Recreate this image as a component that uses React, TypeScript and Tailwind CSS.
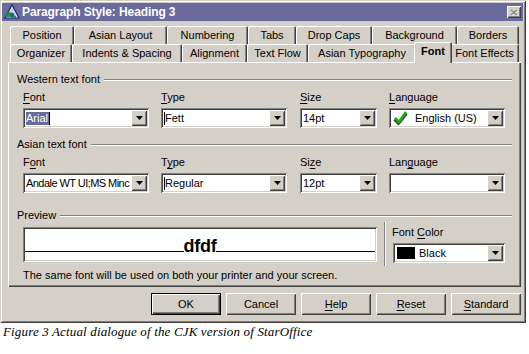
import type { ReactNode } from 'react'

const raised =
  'shadow-[inset_1px_1px_0_#ffffff,inset_-1px_-1px_0_#404040,inset_2px_2px_0_#d4d0c8,inset_-2px_-2px_0_#808080]'
const sunken =
  'shadow-[inset_1px_1px_0_#808080,inset_-1px_-1px_0_#ffffff,inset_2px_2px_0_#404040,inset_-2px_-2px_0_#d4d0c8]'

const backTabs = [
  { label: 'Position', w: 'w-[64px]' },
  { label: 'Asian Layout', w: 'w-[93px]' },
  { label: 'Numbering', w: 'w-[81px]' },
  { label: 'Tabs', w: 'w-[48px]' },
  { label: 'Drop Caps', w: 'w-[76px]' },
  { label: 'Background', w: 'w-[85px]' },
  { label: 'Borders', w: 'w-[62px]' },
]

const frontTabs = [
  { label: 'Organizer', w: 'w-[62px]' },
  { label: 'Indents & Spacing', w: 'w-[110px]' },
  { label: 'Alignment', w: 'w-[65px]' },
  { label: 'Text Flow', w: 'w-[61px]' },
  { label: 'Asian Typography', w: 'w-[108px]' },
  { label: 'Font', w: 'w-[34px]', active: true },
  { label: 'Font Effects', w: 'w-[69px]' },
]

function U({ children }: { children: ReactNode }) {
  return <span className="underline underline-offset-[2px] decoration-1">{children}</span>
}

function Arrow() {
  return (
    <svg width="7" height="4" viewBox="0 0 7 4">
      <path d="M0 0H7L3.5 4Z" fill="#000" />
    </svg>
  )
}

function Combo({ w, children }: { w: string; children?: ReactNode }) {
  return (
    <div className={`${w} h-[20px] bg-white ${sunken} p-[2px] flex`}>
      <div className="flex-1 min-w-0 overflow-hidden whitespace-nowrap flex items-center pl-[1px]">
        {children}
      </div>
      <div className={`w-[16px] h-[16px] bg-[#d4d0c8] ${raised} flex items-center justify-center`}>
        <Arrow />
      </div>
    </div>
  )
}

function GroupTitle({ label, className = '' }: { label: string; className?: string }) {
  return (
    <div className={`flex items-center pl-[9px] pr-[9px] h-[13px] ${className}`}>
      <span className="whitespace-nowrap">{label}</span>
      <div className="flex-1 ml-[4px] border-t border-[#808080] border-b border-b-white" />
    </div>
  )
}

function Check() {
  return (
    <svg width="15" height="14" viewBox="0 0 15 14" className="mr-[7px] ml-[1px]">
      <path d="M2 8 L6 12 L14 2" fill="none" stroke="#404040" strokeWidth="3" transform="translate(-0.5 0.5)" />
      <path d="M2 7 L6 11 L13 1" fill="none" stroke="#16b016" strokeWidth="2.6" />
    </svg>
  )
}

function AppIcon() {
  return (
    <svg width="16" height="16" viewBox="0 0 16 16">
      <path d="M8 1 L15 14 L1 14 Z" fill="#e8e8f0" stroke="#1c2c70" strokeWidth="1.2" />
      <path d="M8 3 L13 13 L3 13 Z" fill="#c8d0e0" />
      <path d="M3 9 C5 7 8 8 7 11 C6 14 3 14 2 12 Z" fill="#1a9a2a" />
      <path d="M7 9 C9 8 11 10 10 12 C9 14 7 14 6 12 Z" fill="#2050c0" />
      <path d="M9 12 C11 11 13 12 12 14 L8 14 Z" fill="#1a9a2a" />
    </svg>
  )
}

function Button({ children, isDefault }: { children: ReactNode; isDefault?: boolean }) {
  return (
    <div
      className={`w-[70px] h-[22px] bg-[#d4d0c8] flex items-center justify-center ${
        isDefault
          ? 'shadow-[inset_0_0_0_1px_#000000,inset_2px_2px_0_#ffffff,inset_-2px_-2px_0_#404040,inset_-3px_-3px_0_#808080]'
          : raised
      }`}
    >
      {children}
    </div>
  )
}

export default function App() {
  return (
    <div className="w-[529px] h-[354px] bg-white font-['Liberation_Sans',Arial,sans-serif] text-[11px] leading-[13px] text-black">
      <div className="w-[526px] h-[323px] bg-[#d4d0c8] shadow-[inset_1px_1px_0_#d4d0c8,inset_-1px_-1px_0_#404040,inset_2px_2px_0_#ffffff,inset_-2px_-2px_0_#808080] pl-[2px] pr-[3px] pt-[3px] flex flex-col">
        {/* title bar */}
        <div className="h-[18px] bg-[#6a6a9c] flex items-center pl-[2px] pr-[2px]">
          <AppIcon />
          <span className="ml-[2px] text-white font-bold text-[12px] tracking-[-0.1px]">
            Paragraph Style: Heading 3
          </span>
          <div className={`ml-auto w-[14px] h-[12px] bg-[#d4d0c8] ${raised} flex items-center justify-center`}>
            <svg width="8" height="7" viewBox="0 0 8 7">
              <path d="M1.5 1.5 L7.5 6.5 M7.5 1.5 L1.5 6.5" stroke="#ffffff" strokeWidth="1.4" />
              <path d="M1 1 L7 6 M7 1 L1 6" stroke="#808080" strokeWidth="1.4" />
            </svg>
          </div>
        </div>

        {/* tabs */}
        <div className="mt-[5px] ml-[8px] flex flex-col">
          <div className="flex h-[18px]">
            {backTabs.map((t) => (
              <div
                key={t.label}
                className={`${t.w} h-[18px] rounded-t-[2px] bg-[#d4d0c8] shadow-[inset_1px_1px_0_#ffffff,inset_-1px_0_0_#404040,inset_-2px_0_0_#808080] flex justify-center pt-[3px] whitespace-nowrap`}
              >
                {t.label}
              </div>
            ))}
          </div>
          <div className="flex h-[18px] items-end">
            {frontTabs.map((t) =>
              t.active ? (
                <div
                  key={t.label}
                  className="relative z-10 w-[38px] -mx-[2px] h-[21px] -mb-[1px] rounded-t-[2px] bg-[#d4d0c8] shadow-[inset_1px_1px_0_#ffffff,inset_-1px_0_0_#404040,inset_-2px_0_0_#808080] flex justify-center pt-[3px] font-bold whitespace-nowrap"
                >
                  {t.label}
                </div>
              ) : (
                <div
                  key={t.label}
                  className={`${t.w} h-[18px] rounded-t-[2px] bg-[#d4d0c8] shadow-[inset_1px_1px_0_#ffffff,inset_-1px_0_0_#404040,inset_-2px_0_0_#808080] flex justify-center pt-[3px] whitespace-nowrap`}
                >
                  {t.label}
                </div>
              ),
            )}
          </div>
        </div>

        {/* panel */}
        <div className="ml-[6px] w-[513px] h-[225px] shadow-[inset_1px_1px_0_#ffffff,inset_-1px_-1px_0_#404040,inset_-2px_-2px_0_#808080] pt-[11px] flex flex-col">
          <GroupTitle label="Western text font" />
          <div className="mt-[5px] pl-[15px] flex">
            <div className="w-[138px]"><U>F</U>ont</div>
            <div className="w-[139px]"><U>T</U>ype</div>
            <div className="w-[89px]"><U>S</U>ize</div>
            <div><U>L</U>anguage</div>
          </div>
          <div className="mt-[4px] pl-[15px] flex">
            <div className="w-[138px]">
              <Combo w="w-[126px]">
                <span className="bg-[#6a6a9c] text-white pr-[1px]">Arial</span>
                <span className="w-px h-[13px] bg-black" />
              </Combo>
            </div>
            <div className="w-[139px]">
              <Combo w="w-[126px]">
                <span className="w-px h-[13px] bg-black" />
                <span>Fett</span>
              </Combo>
            </div>
            <div className="w-[89px]">
              <Combo w="w-[77px]">14pt</Combo>
            </div>
            <Combo w="w-[116px]">
              <Check />
              English (US)
            </Combo>
          </div>

          <GroupTitle label="Asian text font" className="mt-[10px]" />
          <div className="mt-[5px] pl-[15px] flex">
            <div className="w-[138px]">F<U>o</U>nt</div>
            <div className="w-[139px]">T<U>y</U>pe</div>
            <div className="w-[89px]">Si<U>z</U>e</div>
            <div>Lan<U>g</U>uage</div>
          </div>
          <div className="mt-[4px] pl-[15px] flex">
            <div className="w-[138px]">
              <Combo w="w-[126px]">
                <span className="tracking-[-0.55px]">Andale WT UI;MS Minc</span>
              </Combo>
            </div>
            <div className="w-[139px]">
              <Combo w="w-[126px]">
                <span className="w-px h-[13px] bg-black" />
                <span>Regular</span>
              </Combo>
            </div>
            <div className="w-[89px]">
              <Combo w="w-[77px]">12pt</Combo>
            </div>
            <Combo w="w-[116px]" />
          </div>

          <GroupTitle label="Preview" className="mt-[16px]" />
          <div className="flex">
            <div className="pl-[15px] pt-[5px]">
              <div className={`w-[354px] h-[35px] bg-white ${sunken} p-[2px] flex flex-col`}>
                <div className="h-[26px] flex items-end">
                  <div className="flex-1 h-px bg-black mb-[3px]" />
                  <span className="font-bold text-[18px] leading-[18px] tracking-[-0.3px]">dfdf</span>
                  <div className="flex-1 h-px bg-black mb-[3px]" />
                </div>
              </div>
            </div>
            <div className="ml-[7px] w-[2px] h-[44px] border-l border-[#808080] border-r border-r-white" />
            <div className="ml-[6px] pt-[4px] flex flex-col">
              <div>
                Font <U>C</U>olor
              </div>
              <div className="mt-[4px] ml-[1px]">
                <Combo w="w-[112px]">
                  <span className="w-[18px] h-[12px] bg-black mx-[1px] mr-[4px]" />
                  Black
                </Combo>
              </div>
            </div>
          </div>
          <div className="mt-[3px] pl-[15px] whitespace-nowrap">
            The same font will be used on both your printer and your screen.
          </div>
        </div>

        {/* buttons */}
        <div className="mt-[6px] mr-[2px] flex justify-end gap-[5px]">
          <Button isDefault>OK</Button>
          <Button>Cancel</Button>
          <Button>
            <span><U>H</U>elp</span>
          </Button>
          <Button>
            <span><U>R</U>eset</span>
          </Button>
          <Button>
            <span><U>S</U>tandard</span>
          </Button>
        </div>
      </div>
      <p className="mt-[1px] pl-[3px] font-['Liberation_Serif','Times_New_Roman',serif] italic text-[13px] leading-[15px] tracking-[0.15px]">
        Figure 3 Actual dialogue of the CJK version of StarOffice
      </p>
    </div>
  )
}
